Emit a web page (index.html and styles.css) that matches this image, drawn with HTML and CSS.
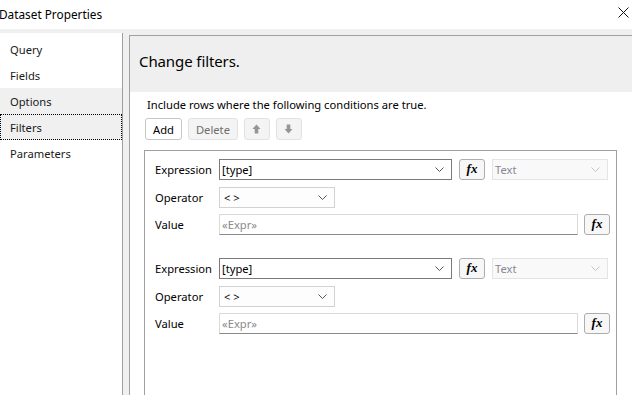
FILE: index.html
```html
<!DOCTYPE html>
<html>
<head>
<meta charset="utf-8">
<link rel="stylesheet" href="styles.css">
</head>
<body>
<div class="window">
  <div class="titlebar">
    <span class="title">Dataset Properties</span>
    <svg class="close" width="11" height="11" viewBox="0 0 11 11"><path d="M0.5 0.5L10.5 10.5M10.5 0.5L0.5 10.5" stroke="#111" stroke-width="1" fill="none"/></svg>
  </div>
  <div class="main">
    <nav class="sidebar">
      <div class="nav-item">Query</div>
      <div class="nav-item">Fields</div>
      <div class="nav-item hover">Options</div>
      <div class="nav-item selected">Filters</div>
      <div class="nav-item">Parameters</div>
    </nav>
    <section class="panel">
      <header class="panel-head">Change filters.</header>
      <div class="panel-body">
        <p class="hint">Include rows where the following conditions are true.</p>
        <div class="toolbar">
          <button class="btn">Add</button>
          <button class="btn disabled">Delete</button>
          <button class="btn disabled icon">
            <svg width="9" height="10" viewBox="0 0 9 10"><path d="M4.5 0.5L8.5 5H6.3V9.5H2.7V5H0.5Z" fill="#959595"/></svg>
          </button>
          <button class="btn disabled icon">
            <svg width="9" height="10" viewBox="0 0 9 10"><path d="M4.5 9.5L8.5 5H6.3V0.5H2.7V5H0.5Z" fill="#959595"/></svg>
          </button>
        </div>
        <div class="filters">
          <div class="filter">
            <div class="row">
              <span class="label">Expression</span>
              <div class="field expr"><span class="val">[type]</span><svg class="chev" width="9" height="5" viewBox="0 0 9 5"><path d="M0.5 0.5L4.5 4.5L8.5 0.5" stroke="#555" fill="none"/></svg></div>
              <button class="fx">fx</button>
              <div class="field type disabled"><span class="val">Text</span><svg class="chev" width="9" height="5" viewBox="0 0 9 5"><path d="M0.5 0.5L4.5 4.5L8.5 0.5" stroke="#c4c4c4" fill="none"/></svg></div>
            </div>
            <div class="row">
              <span class="label">Operator</span>
              <div class="field op"><span class="val">&lt; &gt;</span><svg class="chev" width="9" height="5" viewBox="0 0 9 5"><path d="M0.5 0.5L4.5 4.5L8.5 0.5" stroke="#555" fill="none"/></svg></div>
            </div>
            <div class="row">
              <span class="label">Value</span>
              <div class="field value"><span class="val placeholder">«Expr»</span></div>
              <button class="fx">fx</button>
            </div>
          </div>
          <div class="filter">
            <div class="row">
              <span class="label">Expression</span>
              <div class="field expr"><span class="val">[type]</span><svg class="chev" width="9" height="5" viewBox="0 0 9 5"><path d="M0.5 0.5L4.5 4.5L8.5 0.5" stroke="#555" fill="none"/></svg></div>
              <button class="fx">fx</button>
              <div class="field type disabled"><span class="val">Text</span><svg class="chev" width="9" height="5" viewBox="0 0 9 5"><path d="M0.5 0.5L4.5 4.5L8.5 0.5" stroke="#c4c4c4" fill="none"/></svg></div>
            </div>
            <div class="row">
              <span class="label">Operator</span>
              <div class="field op"><span class="val">&lt; &gt;</span><svg class="chev" width="9" height="5" viewBox="0 0 9 5"><path d="M0.5 0.5L4.5 4.5L8.5 0.5" stroke="#555" fill="none"/></svg></div>
            </div>
            <div class="row">
              <span class="label">Value</span>
              <div class="field value"><span class="val placeholder">«Expr»</span></div>
              <button class="fx">fx</button>
            </div>
          </div>
        </div>
      </div>
    </section>
  </div>
</div>
</body>
</html>
```

FILE: styles.css
```css
* { box-sizing: border-box; }
html, body { margin: 0; padding: 0; }
body {
  width: 632px;
  height: 395px;
  overflow: hidden;
  font-family: "Noto Sans", "Open Sans", sans-serif;
  font-size: 11.2px;
  color: #000;
  background: #fff;
}
.window { width: 632px; height: 395px; display: flex; flex-direction: column; }
.titlebar {
  height: 29px;
  flex: none;
  display: flex;
  align-items: center;
  justify-content: space-between;
  padding: 0 3px 2px 0;
  background: #fff;
}
.title { font-size: 11.8px; color: #000; margin-left: -1px; }
.close { margin-right: 0; margin-top: -2px; }
.main {
  flex: 1;
  display: flex;
  background: #f0f0f0;
  min-height: 0;
}
.sidebar {
  width: 123px;
  flex: none;
  margin-top: 4px;
  padding-top: 3px;
  background: #fff;
  border-right: 1px solid #a0a0a0;
}
.nav-item {
  height: 26px;
  line-height: 25px;
  padding-left: 10px;
  color: #1a1a1a;
  border: 1px solid transparent;
  border-left: 0;
}
.nav-item.hover { background: #f0f0f0; }
.nav-item.selected {
  background: #f0f0f0;
  border: 1px dotted #000;
  border-left: 1px dotted #000;
  padding-left: 9px;
}
.panel {
  flex: 1;
  margin-top: 6px;
  margin-left: 6px;
  border-top: 1px solid #a0a0a0;
  border-left: 1px solid #a0a0a0;
  background: #fff;
  display: flex;
  flex-direction: column;
  min-width: 0;
}
.panel-head {
  height: 56px;
  flex: none;
  background: #efefef;
  padding-left: 9px;
  font-size: 15px;
  letter-spacing: -0.1px;
  line-height: 50px;
  color: #000;
}
.panel-body {
  flex: 1;
  padding-left: 14px;
  display: flex;
  flex-direction: column;
  min-height: 0;
}
.hint { margin: 5px 0 0 3px; line-height: 16px; height: 16px; }
.toolbar { display: flex; gap: 6px; margin-top: 5px; margin-left: 1px; }
.btn {
  height: 22px;
  padding: 0 7px;
  font-family: inherit;
  font-size: 11.2px;
  background: #fff;
  border: 1px solid #c6c6c6;
  border-radius: 3px;
  color: #000;
  display: flex;
  align-items: center;
  justify-content: center;
}
.btn.disabled { background: #f4f4f4; border-color: #e2e2e2; color: #6e6e6e; }
.btn.icon { width: 26px; padding: 0; }
.filters {
  margin-top: 10px;
  margin-right: 15px;
  flex: 1;
  border: 1px solid #a0a0a0;
  border-bottom: 0;
  padding: 8px 0 0 10px;
}
.filter { margin-bottom: 23px; }
.row { display: flex; align-items: center; height: 21px; margin-bottom: 7px; }
.row:nth-child(2) { margin-bottom: 6px; }
.row:last-child { margin-bottom: 0; }
.label { width: 64px; flex: none; }
.field {
  height: 21px;
  display: flex;
  align-items: center;
  justify-content: space-between;
  padding: 0 7px 0 2px;
  background: #fff;
  flex: none;
}
.field .val { line-height: 19px; }
.expr { width: 233px; border: 1px solid #7a7a7a; }
.op { width: 116px; border: 1px solid #d2d2d2; background: #fdfdfd; padding-left: 4px; }
.value { width: 359px; border: 1px solid #dadada; border-bottom-color: #8a8a8a; }
.type { width: 116px; margin-left: 7px; }
.disabled.field { background: #f9f9f9; border: 1px solid #e4e4e4; color: #8a8696; }
.placeholder { color: #8a8a8a; }
.fx {
  width: 26px;
  height: 21px;
  margin-left: 7px;
  padding: 0 0 1px 0;
  border: 1px solid #adadad;
  border-radius: 3px;
  background: #f7f7f7;
  font-family: "Liberation Serif", serif;
  font-weight: bold;
  font-style: italic;
  font-size: 13px;
  color: #000;
  flex: none;
}
.value + .fx { margin-left: 6px; }
```
